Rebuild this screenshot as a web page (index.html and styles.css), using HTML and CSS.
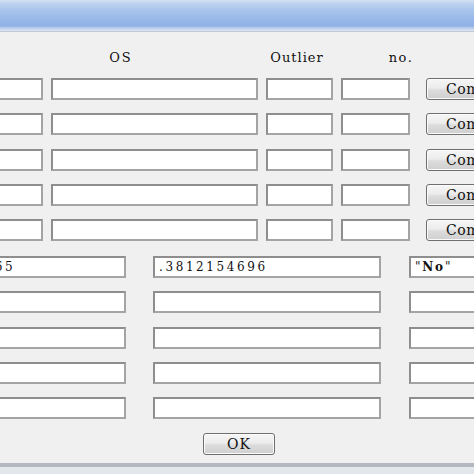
FILE: index.html
```html
<!DOCTYPE html>
<html>
<head>
<meta charset="utf-8">
<link rel="stylesheet" href="styles.css">
</head>
<body>
<div class="titlebar"></div>
<div class="dialog">
  <div class="header">
    <div class="hcell h-os">OS</div>
    <div class="hcell h-outlier">Outlier</div>
    <div class="hcell h-no">no.</div>
  </div>
  <div class="toprows">
    <div class="trow"><div class="box b1"></div><div class="box b2"></div><div class="box b3"></div><div class="box b4"></div><div class="btn cbtn">Compute</div></div>
    <div class="trow"><div class="box b1"></div><div class="box b2"></div><div class="box b3"></div><div class="box b4"></div><div class="btn cbtn">Compute</div></div>
    <div class="trow"><div class="box b1"></div><div class="box b2"></div><div class="box b3"></div><div class="box b4"></div><div class="btn cbtn">Compute</div></div>
    <div class="trow"><div class="box b1"></div><div class="box b2"></div><div class="box b3"></div><div class="box b4"></div><div class="btn cbtn">Compute</div></div>
    <div class="trow"><div class="box b1"></div><div class="box b2"></div><div class="box b3"></div><div class="box b4"></div><div class="btn cbtn">Compute</div></div>
  </div>
  <div class="bottomrows">
    <div class="brow"><div class="box c1 val first">0.65</div><div class="box c2 val">.3812154696</div><div class="box c3 val">"<b>No</b>"</div></div>
    <div class="brow"><div class="box c1"></div><div class="box c2"></div><div class="box c3"></div></div>
    <div class="brow"><div class="box c1"></div><div class="box c2"></div><div class="box c3"></div></div>
    <div class="brow"><div class="box c1"></div><div class="box c2"></div><div class="box c3"></div></div>
    <div class="brow"><div class="box c1"></div><div class="box c2"></div><div class="box c3"></div></div>
  </div>
  <div class="footer">
    <div class="btn okbtn">OK</div>
  </div>
</div>
<div class="statusbar"></div>
</body>
</html>
```

FILE: styles.css
```css
html, body {
  margin: 0;
  padding: 0;
  width: 474px;
  height: 474px;
  overflow: hidden;
  background: #f0f0f0;
}
.titlebar {
  height: 32px;
  background: linear-gradient(#d6e2f2 0px, #c0d4f0 3px, #a9c4ec 10px, #97b7e8 20px, #8fb1e6 26px, #b9cdea 28px, #dfe6ef 31px, #9eabbd 32px);
}
.dialog {
  background: #f0f0f0;
}
.header {
  display: flex;
  height: 46px;
  padding-left: 91px;
  box-sizing: border-box;
  padding-top: 18px;
  font-family: "DejaVu Serif", "Liberation Serif", serif;
  font-size: 13px;
  line-height: 16px;
  letter-spacing: 1px;
  color: #111;
}
.hcell {
  width: 60px;
  text-align: center;
  white-space: nowrap;
}
.h-os { letter-spacing: 2px; }
.h-outlier { margin-left: 116px; }
.h-no { margin-left: 44px; letter-spacing: 1.5px; }
.toprows, .bottomrows {
  display: flex;
  flex-direction: column;
  gap: 13.25px;
}
.trow {
  display: flex;
  gap: 8px;
  margin-left: -30px;
}
.box {
  box-sizing: border-box;
  height: 22px;
  flex: none;
  background: #fff;
  border: 2px solid #a4a4a4;
  border-top-color: #8e8e8e;
  border-left-color: #8e8e8e;
}
.b1 { width: 73px; }
.b2 { width: 207px; }
.b3 { width: 67px; }
.b4 { width: 69px; }
.btn {
  box-sizing: border-box;
  height: 22px;
  flex: none;
  border: 1px solid #6f6f6f;
  border-radius: 3px;
  background: linear-gradient(#f6f6f6 0%, #ececec 45%, #dcdcdc 55%, #cfcfcf 100%);
  box-shadow: inset 0 0 0 1px #fbfbfb;
  font-family: "DejaVu Serif", "Liberation Serif", serif;
  font-size: 14px;
  line-height: 20px;
  letter-spacing: 0.5px;
  color: #111;
  white-space: nowrap;
  overflow: hidden;
}
.cbtn {
  width: 70px;
  margin-left: 8px;
  padding-left: 19px;
}
.bottomrows {
  margin-top: 15px;
}
.brow {
  display: flex;
  margin-left: -40px;
}
.c1 { width: 166px; }
.c2 { width: 228px; margin-left: 27px; }
.c3 { width: 100px; margin-left: 28px; }
.val {
  font-family: "DejaVu Serif", "Liberation Serif", serif;
  font-size: 12px;
  line-height: 18px;
  letter-spacing: 2.6px;
  padding-left: 4px;
  color: #111;
  white-space: nowrap;
  overflow: hidden;
}
.val.first { padding-left: 16px; }
.c3.val { letter-spacing: 1.8px; }
.val b { font-weight: bold; }
.footer {
  padding-top: 14px;
  height: 44px;
  box-sizing: border-box;
}
.okbtn {
  width: 72px;
  margin-left: 203px;
  text-align: center;
  letter-spacing: 1px;
}
.statusbar {
  height: 4px;
  background: #b3b8c1;
  border-bottom: 20px solid #e3e6eb;
}
```
